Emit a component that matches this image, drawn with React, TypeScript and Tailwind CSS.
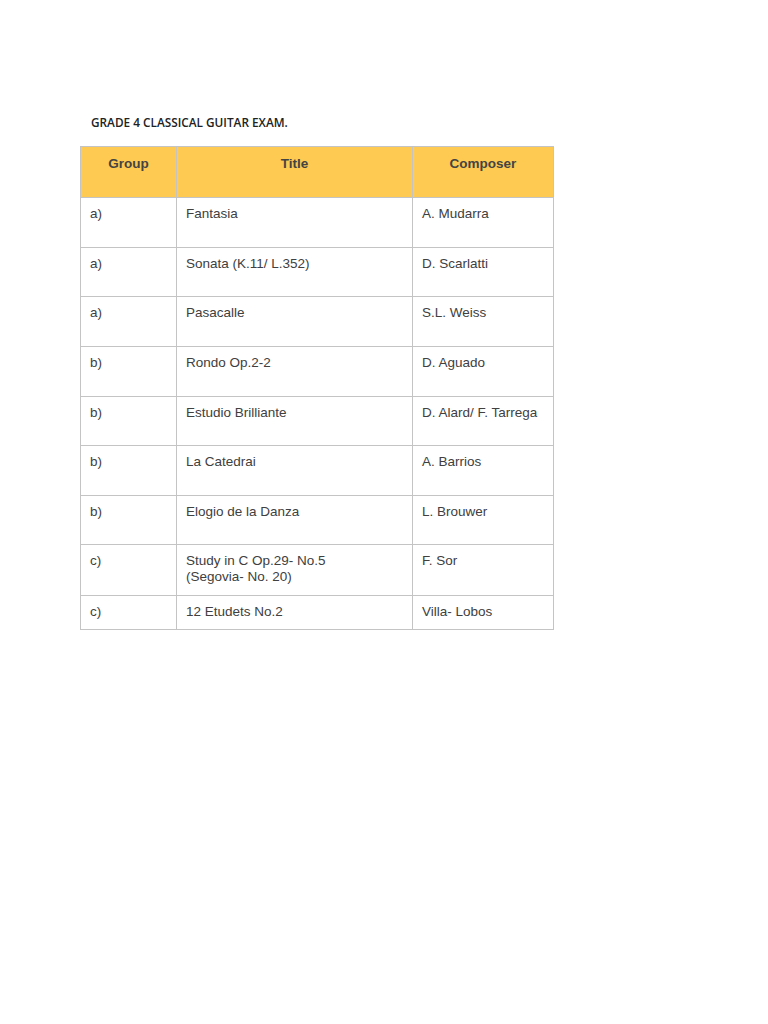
import React from 'react';

interface Piece {
    group: string;
    title: string[];
    composer: string;
    height: number;
}

const pieces: Piece[] = [
    { group: 'a)', title: ['Fantasia'], composer: 'A. Mudarra', height: 50 },
    { group: 'a)', title: ['Sonata (K.11/ L.352)'], composer: 'D. Scarlatti', height: 49 },
    { group: 'a)', title: ['Pasacalle'], composer: 'S.L. Weiss', height: 50 },
    { group: 'b)', title: ['Rondo Op.2-2'], composer: 'D. Aguado', height: 50 },
    { group: 'b)', title: ['Estudio Brilliante'], composer: 'D. Alard/ F. Tarrega', height: 49 },
    { group: 'b)', title: ['La Catedrai'], composer: 'A. Barrios', height: 50 },
    { group: 'b)', title: ['Elogio de la Danza'], composer: 'L. Brouwer', height: 49 },
    { group: 'c)', title: ['Study in C Op.29- No.5', '(Segovia- No. 20)'], composer: 'F. Sor', height: 51 },
    { group: 'c)', title: ['12 Etudets No.2'], composer: 'Villa- Lobos', height: 34 },
];

export default function App() {
    return (
        <div className="w-[768px] h-[1024px] bg-white relative">
            <div className="pt-[114px] pl-[91px]">
                <h1 className="text-[11.8px] font-semibold text-[#222] leading-[16px]" style={{ fontFamily: '"Open Sans", sans-serif' }}>
                    GRADE 4 CLASSICAL GUITAR EXAM.
                </h1>
            </div>
            <div className="pl-[80px] pt-[16px]">
                <table className="border-collapse text-[13.5px] leading-[16px] text-[#404040]" style={{ fontFamily: '"Liberation Sans", Arial, sans-serif' }}>
                    <colgroup>
                        <col className="w-[96px]" />
                        <col className="w-[236px]" />
                        <col className="w-[141px]" />
                    </colgroup>
                    <thead>
                        <tr className="h-[51px] bg-[#ffca52]">
                            <th className="border border-[#c4c4c4] align-top text-center font-bold text-[#444] pt-[9px] px-[9px]">Group</th>
                            <th className="border border-[#c4c4c4] align-top text-center font-bold text-[#444] pt-[9px] px-[9px]">Title</th>
                            <th className="border border-[#c4c4c4] align-top text-center font-bold text-[#444] pt-[9px] px-[9px]">Composer</th>
                        </tr>
                    </thead>
                    <tbody>
                        {pieces.map((p, i) => (
                            <tr key={i} style={{ height: p.height }}>
                                <td className="border border-[#c4c4c4] align-top pt-[8px] px-[9px]">{p.group}</td>
                                <td className="border border-[#c4c4c4] align-top pt-[8px] px-[9px]">
                                    {p.title.map((t) => (
                                        <div key={t}>{t}</div>
                                    ))}
                                </td>
                                <td className="border border-[#c4c4c4] align-top pt-[8px] px-[9px]">{p.composer}</td>
                            </tr>
                        ))}
                    </tbody>
                </table>
            </div>
        </div>
    );
}
